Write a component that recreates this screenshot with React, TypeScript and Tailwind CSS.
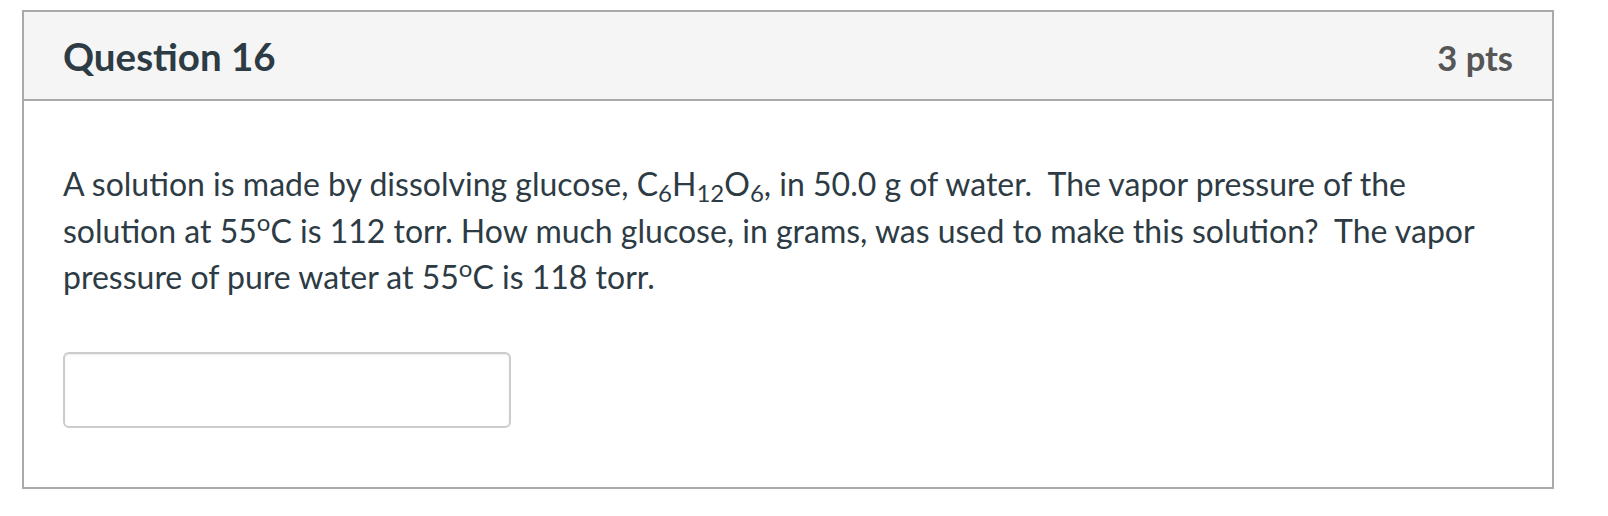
const question = {
  name: "Question 16",
  points: "3 pts",
};

const App = () => {
  return (
    <div className="min-h-screen w-full bg-white font-['Lato','Liberation_Sans',sans-serif] text-[#2d3b45]">
      <div className="pt-[10px] pl-[22px]">
        <div className="w-[1532px] h-[479px] border-2 border-[#aaaaaa] flex flex-col">
          <div className="h-[89px] bg-[#f5f5f5] border-b-2 border-[#aaaaaa] flex items-center justify-between px-[39px]">
            <h2 className="mt-[2px] text-[38.5px] font-bold leading-none">{question.name}</h2>
            <div className="mt-[6px] text-[34.5px] font-bold leading-none text-[#565656]">
              {question.points}
            </div>
          </div>

          <div className="flex-1 px-[39px] pt-[60px]">
            <p className="w-[1430px] text-[32px] leading-[46.5px]">
              A solution is made by dissolving glucose, C<sub>6</sub>H<sub>12</sub>O<sub>6</sub>, in 50.0 g
              of water.&nbsp; The vapor pressure of the solution at 55<sup>o</sup>C is 112 torr. How much
              glucose, in grams, was used to make this solution?&nbsp; The vapor pressure of pure water at
              55<sup>o</sup>C is 118 torr.
            </p>

            <input
              type="text"
              className="mt-[51px] block w-[448px] h-[76px] rounded-[6px] border-2 border-[#cccccc] bg-white shadow-[inset_0_1px_2px_rgba(0,0,0,0.08)] outline-none"
            />
          </div>
        </div>
      </div>
    </div>
  );
};

export default App;
